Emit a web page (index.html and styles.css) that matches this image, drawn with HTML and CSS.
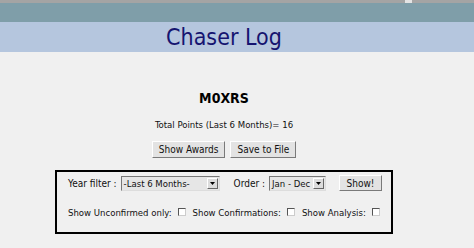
FILE: index.html
```html
<!DOCTYPE html>
<html lang="en">
<head>
    <meta charset="UTF-8">
    <title>Chaser Log</title>
    <link rel="stylesheet" href="styles.css">
</head>
<body>
    <div class="topline"><span class="thumb"></span></div>
    <div class="band"></div>
    <div class="titlebar">
        <h1>Chaser Log</h1>
    </div>

    <div class="content">
        <h2>M0XRS</h2>
        <p class="total">Total Points (Last 6 Months)= 16</p>
        <div class="actions">
            <button class="btn">Show Awards</button>
            <button class="btn">Save to File</button>
        </div>

        <div class="filters">
            <div class="row first">
                <span class="label">Year filter :</span>
                <span class="select year">
                    <span class="value">-Last 6 Months-</span>
                    <span class="arrow"><svg width="5" height="3" viewBox="0 0 5 3"><path d="M0 0H5L2.5 3Z" fill="#000"/></svg></span>
                </span>
                <span class="label order">Order :</span>
                <span class="select months">
                    <span class="value">Jan - Dec</span>
                    <span class="arrow"><svg width="5" height="3" viewBox="0 0 5 3"><path d="M0 0H5L2.5 3Z" fill="#000"/></svg></span>
                </span>
                <button class="btn show">Show!</button>
            </div>
            <div class="row">
                <span class="label">Show Unconfirmed only:</span>
                <span class="check"></span>
                <span class="label">Show Confirmations:</span>
                <span class="check"></span>
                <span class="label">Show Analysis:</span>
                <span class="check"></span>
            </div>
        </div>
    </div>
</body>
</html>
```

FILE: styles.css
```css
* {
    margin: 0;
    padding: 0;
    box-sizing: border-box;
    font-family: 'DejaVu Sans Condensed', 'DejaVu Sans', sans-serif;
}
body {
    background-color: #f0f0f0;
    color: #111;
    width: 474px;
    height: 248px;
    overflow: hidden;
}
.topline {
    height: 3px;
    background: #a4a4a4;
    position: relative;
}
.thumb {
    position: absolute;
    left: 405px;
    top: 0;
    width: 7px;
    height: 3px;
    background: #e4e4e4;
}
.band {
    height: 19px;
    background: #7f9ea9;
}
.titlebar {
    height: 30px;
    background: #b5c6de;
    width: 474px;
}
.titlebar h1 {
    width: 448px;
    text-align: center;
    font-weight: normal;
    font-size: 23px;
    line-height: 30px;
    color: #151470;
}
.content {
    width: 448px;
    display: flex;
    flex-direction: column;
    align-items: center;
}
h2 {
    font-size: 14px;
    margin-top: 38px;
    line-height: 16px;
    color: #000;
}
.total {
    font-size: 9.5px;
    margin-top: 12px;
    line-height: 14px;
}
.actions {
    display: flex;
    gap: 5px;
    margin-top: 9px;
}
.btn {
    font-size: 10px;
    background: #e3e3e3;
    color: #111;
    border: 1px solid;
    border-color: #fff #7a7a7a #7a7a7a #fff;
    height: 17px;
    padding: 0 6px;
    white-space: nowrap;
}
.filters {
    margin-top: 12px;
    width: 338px;
    border: 2px solid #000;
    padding: 3px 0 0 11px;
    height: 64px;
}
.row {
    display: flex;
    align-items: center;
    font-size: 9.5px;
    height: 16px;
    white-space: nowrap;
}
.row + .row {
    margin-top: 13px;
}
.label {
    margin-right: 5px;
}
.first {
    font-size: 10px;
}
.first .label {
    margin-right: 4px;
}
.first .order {
    margin-left: 14px;
}
.select {
    display: flex;
    align-items: center;
    height: 15px;
    background: #e6e6e6;
    border: 1px solid;
    border-color: #777 #ddd #ddd #777;
    padding-left: 2px;
    font-size: 9.5px;
}
.select .value {
    flex: 1;
}
.year {
    width: 99px;
}
.months {
    width: 57px;
}
.arrow {
    width: 11px;
    height: 11px;
    margin-right: 1px;
    background: #dcdcdc;
    border: 1px solid;
    border-color: #fff #666 #666 #fff;
    display: flex;
    align-items: center;
    justify-content: center;
}
.show {
    margin-left: 13px;
    width: 43px;
    height: 16px;
}
.check {
    width: 8px;
    height: 8px;
    background: #fff;
    border: 1px solid;
    border-color: #555 #ccc #ccc #555;
    margin-right: 7px;
    margin-left: 1px;
}
```
